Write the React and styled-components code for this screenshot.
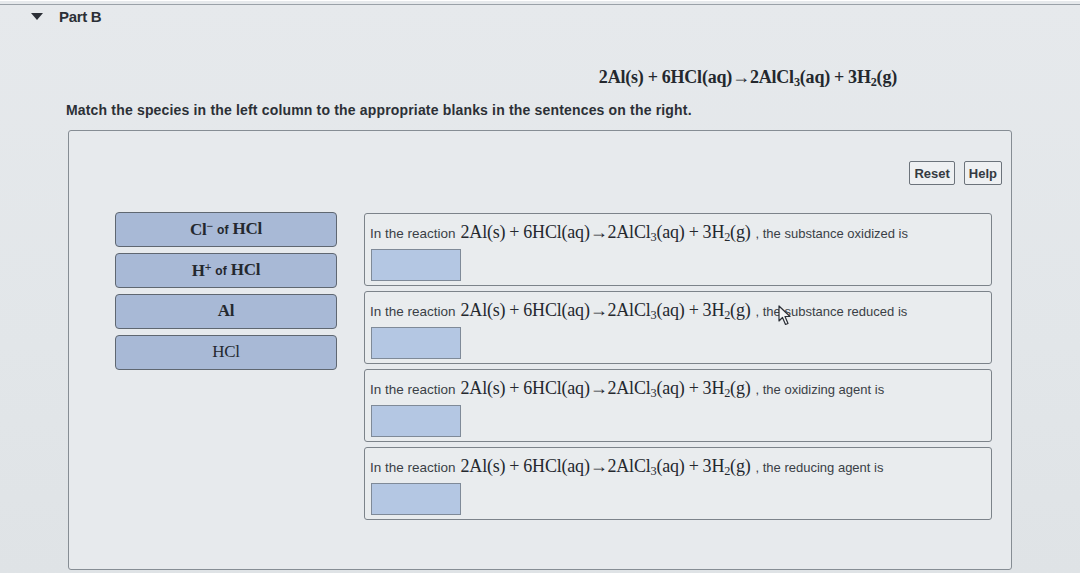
import React from "react";
import styled, { createGlobalStyle } from "styled-components";

const GlobalStyle = createGlobalStyle`
  html, body {
    margin: 0;
    padding: 0;
    background: #e1e5e8;
    font-family: "Liberation Sans", Arial, sans-serif;
    color: #2a2e34;
  }
`;

const Page = styled.div`
  width: 1080px;
  height: 573px;
  overflow: hidden;
  background: linear-gradient(180deg, #e6e9ec 0%, #e2e6e9 60%, #dfe3e6 100%);
  border-top: 1px solid #fff;
`;

const PartHeader = styled.div`
  display: flex;
  align-items: center;
  gap: 16px;
  height: 30px;
  padding-left: 31px;
  border-top: 1px solid #9aa1a8;
  margin-top: 3px;
  box-sizing: border-box;
  padding-bottom: 6px;
`;

const Caret = styled.span`
  width: 0;
  height: 0;
  border-left: 6px solid transparent;
  border-right: 6px solid transparent;
  border-top: 7px solid #2b2f36;
`;

const PartTitle = styled.span`
  font-size: 15px;
  font-weight: 700;
  letter-spacing: -0.3px;
  color: #2b2f36;
`;

const EquationRow = styled.div`
  display: flex;
  justify-content: flex-end;
  padding-right: 183px;
  margin-top: 32px;
  height: 24px;
  align-items: center;
`;

const Instruction = styled.p`
  margin: 12px 0 0 66px;
  font-size: 14px;
  letter-spacing: 0.17px;
  font-weight: 700;
  color: #2c3036;
`;

const Panel = styled.div`
  margin: 12px 0 0 68px;
  width: 944px;
  height: 440px;
  box-sizing: border-box;
  border: 1px solid #868d94;
  border-radius: 3px;
  background: #e7eaed;
  padding: 30px 9px 0 46px;
`;

const Toolbar = styled.div`
  display: flex;
  justify-content: flex-end;
  gap: 9px;
`;

const ToolButton = styled.button`
  height: 24px;
  padding: 0 4px;
  border: 1px solid #6c737b;
  border-radius: 2px;
  background: #eef0f2;
  font-family: "Liberation Sans", Arial, sans-serif;
  font-size: 13px;
  font-weight: 700;
  color: #353a41;
`;

const Body = styled.div`
  display: grid;
  grid-template-columns: 222px 628px;
  column-gap: 27px;
  margin-top: 27px;
`;

const Bank = styled.div`
  display: flex;
  flex-direction: column;
  gap: 6px;
`;

const Chip = styled.div`
  height: 35px;
  box-sizing: border-box;
  display: flex;
  justify-content: center;
  padding-top: 6px;
  border: 1px solid #5f6771;
  border-radius: 4px;
  background: #a8b9d6;
  color: #22262c;
`;

const Small = styled.span`
  font-family: "Liberation Sans", Arial, sans-serif;
  font-size: 12px;
  font-weight: 700;
  margin: 0 4px;
  align-self: flex-start;
  padding-top: 4px;
`;

const Sentences = styled.div`
  display: flex;
  flex-direction: column;
  gap: 5px;
  margin-top: 1px;
`;

const Sentence = styled.div`
  position: relative;
  height: 73px;
  box-sizing: border-box;
  border: 1px solid #7c838a;
  border-radius: 3px;
  background: #e9ecee;
  padding: 8px 6px 0 5px;
`;

const Line = styled.div`
  display: flex;
  align-items: baseline;
  font-size: 13.5px;
  color: #3a3f46;
  white-space: nowrap;
`;

const Lead = styled.span`
  margin-right: 5px;
`;

const Tail = styled.span`
  margin-left: 5px;
  font-size: 13px;
`;

const Drop = styled.div`
  margin-top: 4px;
  margin-left: 1px;
  width: 90px;
  height: 32px;
  box-sizing: border-box;
  border: 1px solid #7f8a98;
  background: #b4c7e3;
`;

const Math = styled.span`
  font-family: "Liberation Serif", "Times New Roman", serif;
  font-size: ${(p) => p.$size || 18}px;
  font-weight: ${(p) => (p.$bold ? 700 : 400)};
  color: #24282e;
  letter-spacing: -0.2px;
`;

const Sub = styled.span`
  font-size: 0.68em;
  vertical-align: -0.22em;
`;

const Sup = styled.span`
  font-size: 0.7em;
  vertical-align: 0.45em;
`;

const Op = styled.span`
  margin: 0 4px;
`;

const Cursor = styled.svg`
  position: absolute;
  left: 413px;
  top: 13px;
`;

function Reaction({ size, bold }) {
  return (
    <Math $size={size} $bold={bold}>
      2Al(s)<Op>+</Op>6HCl(aq)→2AlCl<Sub>3</Sub>(aq)<Op>+</Op>3H<Sub>2</Sub>(g)
    </Math>
  );
}

const sentences = [
  "the substance oxidized is",
  "the substance reduced is",
  "the oxidizing agent is",
  "the reducing agent is",
];

export default function App() {
  return (
    <Page>
      <GlobalStyle />
      <PartHeader>
        <Caret />
        <PartTitle>Part B</PartTitle>
      </PartHeader>

      <EquationRow>
        <Reaction size={18} bold />
      </EquationRow>

      <Instruction>
        Match the species in the left column to the appropriate blanks in the sentences on the right.
      </Instruction>

      <Panel>
        <Toolbar>
          <ToolButton>Reset</ToolButton>
          <ToolButton>Help</ToolButton>
        </Toolbar>

        <Body>
          <Bank>
            <Chip>
              <Math $size={17} $bold>
                Cl<Sup>−</Sup>
              </Math>
              <Small>of</Small>
              <Math $size={17} $bold>HCl</Math>
            </Chip>
            <Chip>
              <Math $size={17} $bold>
                H<Sup>+</Sup>
              </Math>
              <Small>of</Small>
              <Math $size={17} $bold>HCl</Math>
            </Chip>
            <Chip>
              <Math $size={17} $bold>Al</Math>
            </Chip>
            <Chip>
              <Math $size={17}>HCl</Math>
            </Chip>
          </Bank>

          <Sentences>
            {sentences.map((s, i) => (
              <Sentence key={s}>
                <Line>
                  <Lead>In the reaction</Lead>
                  <Reaction size={18} />
                  <Tail>, {s}</Tail>
                </Line>
                <Drop />
                {i === 1 && (
                  <Cursor width="16" height="22" viewBox="0 0 16 22">
                    <path
                      d="M1 1 L1 16 L4.5 12.5 L7.5 19.5 L10 18.5 L7 11.5 L12 11.5 Z"
                      fill="#f4f5f6"
                      stroke="#2b2f36"
                      strokeWidth="1.2"
                      strokeLinejoin="round"
                    />
                  </Cursor>
                )}
              </Sentence>
            ))}
          </Sentences>
        </Body>
      </Panel>
    </Page>
  );
}
